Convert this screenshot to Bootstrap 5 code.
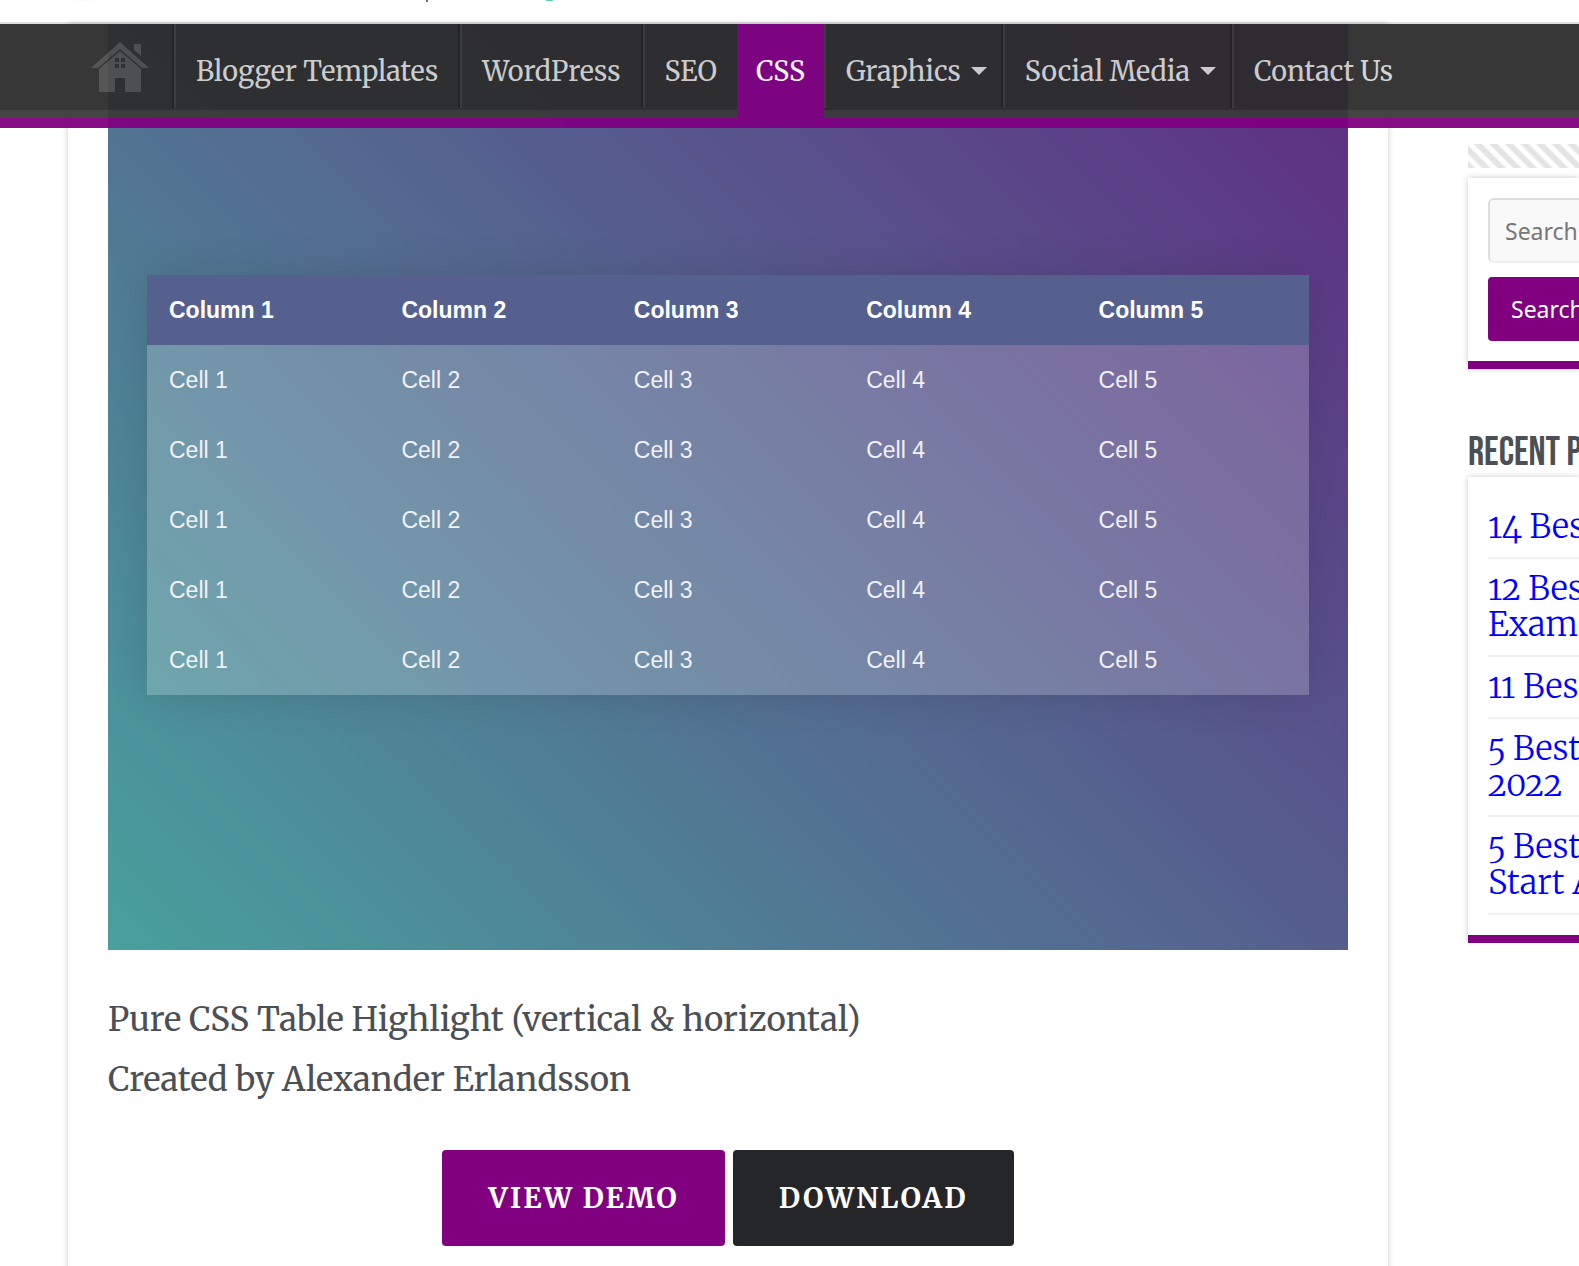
<!DOCTYPE html>
<html lang="en">
<head>
<meta charset="utf-8">
<meta name="viewport" content="width=device-width, initial-scale=1">
<title>Pure CSS Table Highlight</title>
<link href="https://cdn.jsdelivr.net/npm/bootstrap@5.3.0/dist/css/bootstrap.min.css" rel="stylesheet">
<style>
:root { --brand: #800080; --serif: "Merriweather", "DejaVu Serif Condensed", "DejaVu Serif", serif; }
body { font-family: var(--serif); color: #4c4f53; background: #fff; overflow-x: hidden; }
.top-strip { height: 24px; border-bottom: 2px solid #dcdedf; }
.site-nav { top: 24px; height: 104px; opacity: .95; background: #2d2d2d; border-bottom: 10px solid var(--brand); padding: 0 0 0 70px; }
.site-nav::after { content: ""; position: absolute; left: 0; right: 0; bottom: 0; height: 8px; background: #3a3a3a; z-index: -1; }
.site-nav .nav-item { height: 84px; border-left: 2px solid #3b3b3b; border-right: 2px solid #212121; }
.site-nav .nav-item:first-child { border-left-color: transparent; }
.site-nav .nav-item:last-child { border-right-color: transparent; }
.site-nav .navbar-nav .nav-link { height: 84px; padding: 9px 20px 0; color: #d2d2d2; font-size: 27px; line-height: 36px; white-space: nowrap; display: flex; align-items: center; }
.site-nav .nav-item.current { height: 94px; background: var(--brand); border-color: var(--brand); margin-left: -2px; }
.site-nav .navbar-nav .current .nav-link { color: #fff; padding-left: 17px; padding-right: 17px; }
.site-nav .navbar-nav .home-link { padding: 2px 23px 0 19px; }
.site-nav .navbar-nav .dropdown-toggle { padding-right: 14px; }
.site-nav .dropdown-toggle::after { border-top: 8px solid; border-left: 8px solid transparent; border-right: 8px solid transparent; margin-left: 10px; }
.page-row { padding-left: 68px; gap: 80px; }
.post { min-width: 0; background: #fff; padding: 0 40px 60px; box-shadow: 0 0 6px rgba(0,0,0,.22); }
.demo-shot { background: linear-gradient(45deg, #49a09d, #5f2c82); padding: 251px 39px 255px; }
.demo-table { width: 100%; table-layout: fixed; border-collapse: collapse; box-shadow: 0 0 40px rgba(0,0,0,.12); font: 23px/30px "Liberation Sans", sans-serif; color: #f2f2f6; }
.demo-table th, .demo-table td { padding: 20px 22px; }
.demo-table th { background: #55608f; color: #fff; }
.demo-table td { background: rgba(255,255,255,.2); }
.post-text { font-size: 33px; line-height: 60px; padding: 40px 0; }
.post-btn { height: 96px; padding: 0 46px; border: 0; border-radius: 4px; color: #fff; font: bold 28px/40px var(--serif); letter-spacing: 2px; }
.btn-demo, .btn-demo:hover { background: var(--brand); color: #fff; }
.btn-down, .btn-down:hover { background: #25262a; color: #fff; }
.side { width: 111px; padding-top: 120px; overflow: hidden; white-space: nowrap; margin-left: -8px; padding-left: 8px; box-sizing: content-box; }
.stripes { height: 24px; margin-bottom: 10px; background: repeating-linear-gradient(45deg, #e4e4e4 0 4px, #fff 6px 9px, #e4e4e4 11px); }
.widget { background: #fff; border-bottom: 8px solid var(--brand); padding: 20px 0 20px 20px; box-shadow: 0 0 6px rgba(0,0,0,.22); }
.side-input { width: 360px; height: 65px; border: 2px solid #ddd; border-bottom-color: #eee; border-radius: 6px; background: #f9f9f9; padding: 0 15px; font: 23px/32px "Noto Sans", sans-serif; display: block; margin-bottom: 14px; }
.side-input::placeholder { color: #777; opacity: 1; }
.side-btn, .side-btn:hover { height: 64px; border: 0; border-radius: 4px; background: var(--brand); color: #fff; padding: 0 23px; font: 23px/32px "Noto Sans", sans-serif; display: block; }
.side-title { font: 40px/46px "Bebas Neue", "Liberation Sans", sans-serif; margin: 61px 0 1px; color: #4c4f53; text-transform: uppercase; }
.recent li { border-bottom: 2px solid #f0f0f0; padding: 12px 0; font-size: 33px; line-height: 36px; font-weight: 300; font-variant-numeric: oldstyle-nums; }
.recent a { color: #00f; text-decoration: none; }
</style>
</head>
<body>
<header>
  <div class="top-strip">
    <svg width="600" height="4" class="d-block" aria-hidden="true"><path d="M426 0h2v2h-2z" fill="#7a6a60"/><path d="M545 0h9l-2 1h-5z" fill="#4fd0a0"/><path d="M76 0h16v1h-16z" fill="#f9f9f9"/></svg>
  </div>
  <nav class="site-nav navbar navbar-expand fixed-top align-items-start" aria-label="Main">
    <ul class="navbar-nav">
      <li class="nav-item"><a class="nav-link home-link" href="#" aria-label="Home">
        <svg width="58" height="50" viewBox="0 0 58 50" fill="#4d4d4d" aria-hidden="true">
          <path d="M29 0 58 26H51L29 7 7 26H0z"/><path d="M43 2h7v12l-7-6z"/>
          <path fill-rule="evenodd" d="M29 9 50 27V50H34V36H24V50H8V27zM24 16v4h4v-4zm6 0v4h4v-4zM24 22v4h4v-4zm6 0v4h4v-4z"/>
        </svg></a></li>
      <li class="nav-item"><a class="nav-link" href="#">Blogger Templates</a></li>
      <li class="nav-item"><a class="nav-link" href="#">WordPress</a></li>
      <li class="nav-item"><a class="nav-link" href="#">SEO</a></li>
      <li class="nav-item current"><a class="nav-link" href="#" aria-current="page">CSS</a></li>
      <li class="nav-item dropdown"><a class="nav-link dropdown-toggle" href="#" role="button" data-bs-toggle="dropdown" aria-expanded="false">Graphics</a></li>
      <li class="nav-item dropdown"><a class="nav-link dropdown-toggle" href="#" role="button" data-bs-toggle="dropdown" aria-expanded="false">Social Media</a></li>
      <li class="nav-item"><a class="nav-link" href="#">Contact Us</a></li>
    </ul>
  </nav>
</header>
<div class="page-row d-flex align-items-start">
  <main class="post flex-grow-1">
    <div class="demo-shot">
      <table class="demo-table">
        <thead><tr><th>Column 1</th><th>Column 2</th><th>Column 3</th><th>Column 4</th><th>Column 5</th></tr></thead>
        <tbody>
          <tr><td>Cell 1</td><td>Cell 2</td><td>Cell 3</td><td>Cell 4</td><td>Cell 5</td></tr>
          <tr><td>Cell 1</td><td>Cell 2</td><td>Cell 3</td><td>Cell 4</td><td>Cell 5</td></tr>
          <tr><td>Cell 1</td><td>Cell 2</td><td>Cell 3</td><td>Cell 4</td><td>Cell 5</td></tr>
          <tr><td>Cell 1</td><td>Cell 2</td><td>Cell 3</td><td>Cell 4</td><td>Cell 5</td></tr>
          <tr><td>Cell 1</td><td>Cell 2</td><td>Cell 3</td><td>Cell 4</td><td>Cell 5</td></tr>
        </tbody>
      </table>
    </div>
    <p class="post-text mb-0">Pure CSS Table Highlight (vertical &amp; horizontal)<br>Created by Alexander Erlandsson</p>
    <div class="d-flex justify-content-center gap-2">
      <button type="button" class="btn post-btn btn-demo">VIEW DEMO</button>
      <button type="button" class="btn post-btn btn-down">DOWNLOAD</button>
    </div>
  </main>
  <aside class="side flex-shrink-0">
    <div class="stripes"></div>
    <form class="widget" role="search">
      <input class="side-input" type="search" placeholder="Search" aria-label="Search">
      <button type="button" class="btn side-btn">Search</button>
    </form>
    <h2 class="side-title">Recent P</h2>
    <div class="widget">
      <ul class="recent list-unstyled mb-0">
        <li><a href="#">14 Bes</a></li>
        <li><a href="#">12 Bes<br>Exam</a></li>
        <li><a href="#">11 Bes</a></li>
        <li><a href="#">5 Best<br>2022</a></li>
        <li><a href="#">5 Best<br>Start A</a></li>
      </ul>
    </div>
  </aside>
</div>
<script src="https://cdn.jsdelivr.net/npm/bootstrap@5.3.0/dist/js/bootstrap.bundle.min.js"></script>
</body>
</html>
